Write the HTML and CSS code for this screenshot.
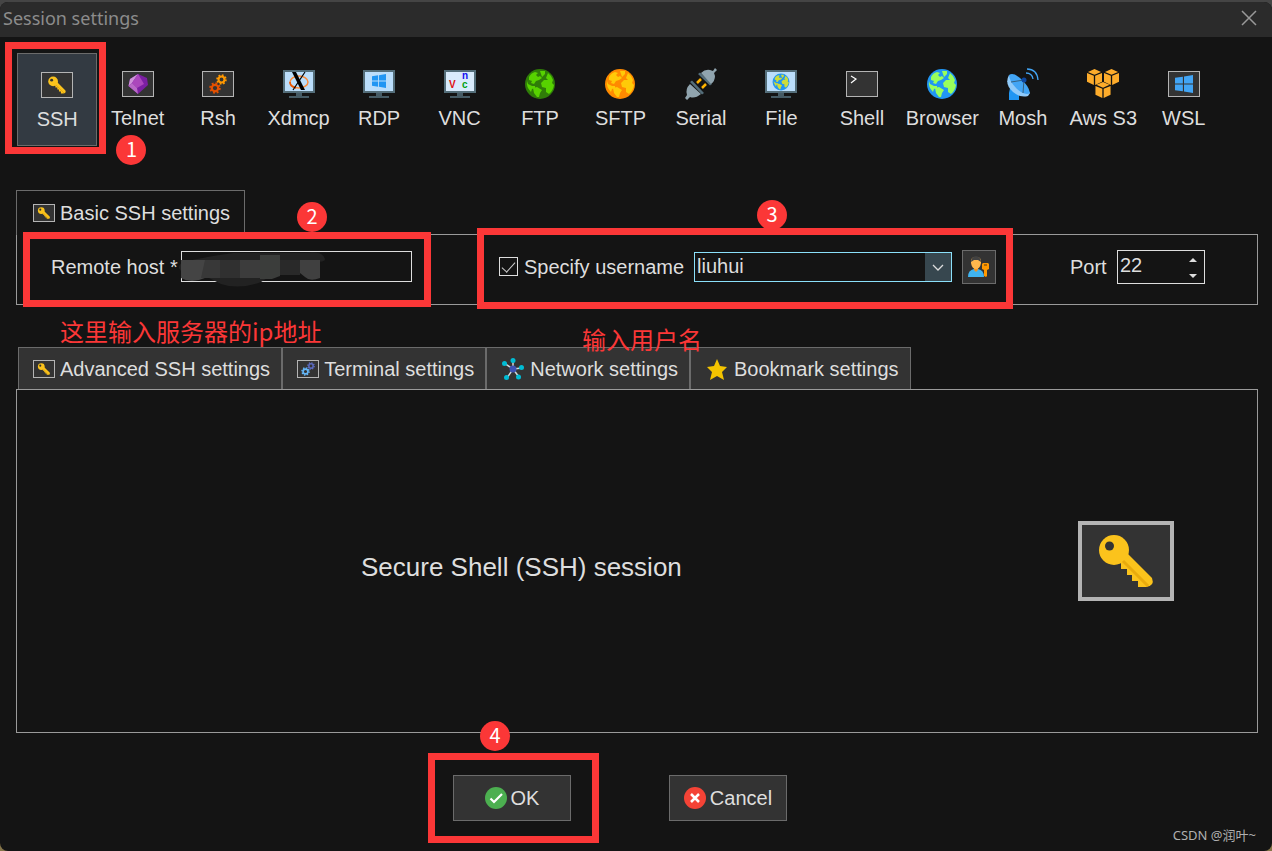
FILE: index.html
```html
<!DOCTYPE html>
<html lang="en">
<head>
    <meta charset="UTF-8">
    <meta name="viewport" content="width=device-width, initial-scale=1.0">
    <title>Session settings</title>
    <link rel="stylesheet" href="styles.css">
</head>
<body>
    <!-- Shared icon shapes -->
    <svg class="sprite" aria-hidden="true">
        <symbol id="key" viewBox="0 0 96 80">
            <path d="M48 31 74 57q3 8-6 9h-8v-6h-6v-6h-5v-6h-6v-6l-8-6z" fill="#fbc31c"/>
            <circle cx="36" cy="29" r="15" fill="#fbc31c"/>
            <path d="M45 40 70 65" stroke="#e9ab0d" stroke-width="3"/>
            <circle cx="31.500" cy="25" r="4.500" fill="#333"/>
        </symbol>
        <symbol id="box" viewBox="0 0 32 32">
            <rect x="0.500" y="3.500" width="31" height="25" fill="#333" stroke="#b4b4b4"/>
        </symbol>
        <symbol id="gear" viewBox="-12 -12 24 24">
            <circle r="6.500" fill="none" stroke="currentColor" stroke-width="4.500"/>
            <circle r="9.500" fill="none" stroke="currentColor" stroke-width="4" pathLength="16" stroke-dasharray="1 1"/>
        </symbol>
        <symbol id="monitor" viewBox="0 0 32 32">
            <path d="M0 2h32v23H0z" fill="#546e7a"/>
            <path d="M13 25h6v3h-6zM6 28h20v2H6z" fill="#455a64"/>
            <path d="M2 4h28v19H2z" fill="#bbdefb"/>
        </symbol>
        <symbol id="windows" viewBox="0 0 16 16">
            <path d="M0 2.500 7 1.500v6H0zM8 1.300 16 0v7.500H8zM0 8.500h7v6L0 13.500zM8 8.500h8V16l-8-1.300z" fill="currentColor"/>
        </symbol>
        <symbol id="globe" viewBox="0 0 32 32">
            <circle cx="16" cy="16" r="15" fill="var(--sea)"/>
            <path d="M5 9q2-4 6-5l3 1-2 2 2 2 2-1 2 2-3 2-3 1-2 3-3-1 1-2-3-1z" fill="var(--land)"/>
            <path d="M16 3l5 0 0 3-3 3-1-3zM3 13l1 3 4 2 3 0 0 2-3 1-1 3q-5-5-4-11z" fill="var(--land)"/>
            <path d="M9 20l4-1 5 3-2 3-1 4-2 0-3-4z" fill="var(--land)"/>
            <path d="M24 5q4 3 5 7l-1 3 2 2q-1 6-5 9l-3-2 0-4-4-1-1-4 3-3 4 0-2-2z" fill="var(--land)"/>
        </symbol>
        <symbol id="cube" viewBox="0 0 16 18">
            <path d="M8 0l7 3-7 3-7-3zM0 4.200l7.300 3V17L0 13.500zM16 4.200l-7.300 3V17L16 13.500z" fill="#fdac2b"/>
        </symbol>
    </svg>

    <div class="window">
        <header class="titlebar">
            <h1>Session settings</h1>
            <button class="close" aria-label="Close">
                <svg width="16" height="16"><path d="M1 1 15 15M15 1 1 15" stroke="#999" stroke-width="1.500"/></svg>
            </button>
        </header>

        <nav class="types">
            <button class="type selected">
                <svg class="icon"><use href="#box"/><use href="#key" y="3" width="32" height="26"/></svg>
                <span>SSH</span>
                <i class="frame frame-ssh"></i>
            </button>
            <button class="type">
                <svg class="icon"><use href="#box"/>
                    <path d="M16 6 8 11 6.500 18 16 26 26 17 25 10z" fill="#7b1fa2"/>
                    <path d="M16 6 8 11 6.500 18 10 15z" fill="#ce93d8"/>
                    <path d="M16 6 10 15 15 20 22 16z" fill="#ab47bc"/>
                    <path d="M6.500 18 10 15 15 20 16 26z" fill="#ba68c8"/>
                </svg>
                <span>Telnet</span>
                <b class="badge badge-1">1</b>
            </button>
            <button class="type">
                <svg class="icon"><use href="#box"/>
                    <use href="#gear" x="14" y="6" width="11" height="11" color="#ff9800"/>
                    <use href="#gear" x="7" y="14" width="12" height="12" color="#e65100"/>
                </svg>
                <span>Rsh</span>
            </button>
            <button class="type">
                <svg class="icon"><use href="#monitor"/>
                    <ellipse cx="16" cy="14" rx="9" ry="6" fill="none" stroke="#fb8c3c" stroke-width="1.500"/>
                    <path d="M7 14a9 6 0 0 0 6 6" fill="none" stroke="#e65100" stroke-width="1.500"/>
                    <path d="M9 4h4L22 22h-4z"/><path d="M22 4 10 22" stroke="#000" stroke-width="1.200"/>
                </svg>
                <span>Xdmcp</span>
            </button>
            <button class="type">
                <svg class="icon"><use href="#monitor"/><use href="#windows" x="9" y="6" width="14" height="14" color="#2196f3"/></svg>
                <span>RDP</span>
            </button>
            <button class="type">
                <svg class="icon"><use href="#monitor"/>
                    <path d="M2 4h28v19H2z" fill="#d9ebfc"/>
                    <text x="5" y="20" fill="#e01010">V</text>
                    <text x="18" y="11" fill="#1010f0">n</text>
                    <text x="18" y="20" fill="#00a010">c</text>
                </svg>
                <span>VNC</span>
            </button>
            <button class="type">
                <svg class="icon globe-green"><use href="#globe"/></svg>
                <span>FTP</span>
            </button>
            <button class="type">
                <svg class="icon globe-orange"><use href="#globe"/></svg>
                <span>SFTP</span>
            </button>
            <button class="type">
                <svg class="icon">
                    <path d="M12 15 16 11M17 20 21 16" stroke="#ffb300" stroke-width="2.500"/>
                    <path d="M13 6 15 4.500 27 16 25 17.500zM5 14 7 12.500 19 25 17 26.500z" fill="#546e7a"/>
                    <path d="M16 5q4-4 9-3l3 1 2-3 2 2-3 3 1 3q0 5-4 8zM5 16q-5 5-3 11l-2 3 2 2 3-3q5 2 11-3z" fill="#90a4ae"/>
                </svg>
                <span>Serial</span>
            </button>
            <button class="type">
                <svg class="icon globe-file"><use href="#monitor"/><use href="#globe" x="7" y="5" width="18" height="18"/></svg>
                <span>File</span>
            </button>
            <button class="type">
                <svg class="icon"><use href="#box"/><path d="M5 8l5 3-5 4" fill="none" stroke="#fff" stroke-width="1.200"/></svg>
                <span>Shell</span>
            </button>
            <button class="type">
                <svg class="icon globe-blue"><use href="#globe"/></svg>
                <span>Browser</span>
            </button>
            <button class="type">
                <svg class="icon">
                    <path d="M2 25l1-5 9 6v6H2z" fill="#2196f3"/>
                    <path d="M2 7q-5 9 4 17 7 6 15 4l2-3z" fill="#90caf9"/>
                    <path d="M2 7q4-3 11 3 9 8 10 15-5 3-13-4Q2 13 2 7z" fill="#42a5f5"/>
                    <path d="M4 14 17 12 16 25" fill="none" stroke="#37607d"/>
                    <circle cx="17" cy="12" r="2.500" fill="#0d47a1"/>
                    <path d="M19 5q6 0 7 6M20 1q10 0 11 11" fill="none" stroke="#42a5f5" stroke-width="1.300"/>
                </svg>
                <span>Mosh</span>
            </button>
            <button class="type">
                <svg class="icon">
                    <use href="#cube" x="0" y="1" width="15" height="17"/>
                    <use href="#cube" x="17" y="1" width="15" height="17"/>
                    <use href="#cube" x="8" y="14" width="16" height="17"/>
                </svg>
                <span>Aws S3</span>
            </button>
            <button class="type">
                <svg class="icon"><use href="#box"/><use href="#windows" x="7" y="7" width="18" height="18" color="#42a5f5"/></svg>
                <span>WSL</span>
            </button>
        </nav>

        <section class="basic">
            <div class="tabs">
                <button class="tab active">
                    <svg class="tab-icon" viewBox="0 0 22 18"><rect x="0.500" y="0.500" width="21" height="17" fill="#333" stroke="#b4b4b4"/><use href="#key" width="22" height="18"/></svg>
                    Basic SSH settings
                </button>
            </div>
            <form class="panel fields">
                <div class="field remote">
                    <label for="host">Remote host *</label>
                    <input type="text" id="host">
                    <svg class="scribble" viewBox="0 0 162 36">
                        <path d="M6 17q0-6 8-7L40 5 60 2h66l8 0q16-2 18 6 0 4-12 2l-4 2v6L96 26 88 31q-22 8-40 2L34 26 8 20z" fill="#222"/>
                        <path d="M8 9h24v18q-14 6-24 0z" fill="#444"/>
                        <path d="M32 9h36v18H28z" fill="#383838"/>
                        <path d="M47 9h20v18H47z" fill="#303030"/>
                        <path d="M67 9h20v18H67z" fill="#3c3c3c"/>
                        <path d="M87 4h20v21l-8 3H87z" fill="#3b3d3b"/>
                        <path d="M107 9h20v15h-20z" fill="#292929"/>
                        <path d="M127 9h20v18q-10 4-15-1l-5-4z" fill="#404040"/>
                    </svg>
                    <i class="frame"></i>
                    <b class="badge badge-2">2</b>
                </div>

                <div class="field user">
                    <input type="checkbox" id="specify" checked>
                    <label for="specify">Specify username</label>
                    <div class="combo">
                        <select id="username" aria-label="Username">
                            <option>liuhui</option>
                        </select>
                        <svg class="combo-arrow" viewBox="0 0 26 28"><path d="M8 12l5 5 5-5" fill="none" stroke="#ddd" stroke-width="1.300"/></svg>
                    </div>
                    <button type="button" class="users" aria-label="Manage users">
                        <svg width="24" height="24" viewBox="0 0 24 24">
                            <path d="M1 22q0-7 6-8h4q6 1 6 8z" fill="#40b4f0"/>
                            <path d="M7 11h4v4l-2 2-2-2z" fill="#f09020"/>
                            <path d="M4 6q0-4 5-4 5 0 5 4v2q-1 6-5 6T4 8z" fill="#ffb74d"/>
                            <path d="M4 7q0-5 5-6 5 1 5 6l-3-2H7z" fill="#424242"/>
                            <path d="M15 9l1-1h5l1 1v5l-2 1v6l-1 1-2-1v-6l-2-1z" fill="#ff9800"/>
                            <path d="M17 10h3" stroke="#5d3a10"/>
                        </svg>
                    </button>
                    <i class="frame"></i>
                    <b class="badge badge-3">3</b>
                    <p class="note note-user" lang="zh">输入用户名</p>
                </div>

                <div class="field port">
                    <label for="port">Port</label>
                    <input type="number" id="port" value="22">
                    <svg class="spin" width="8" height="20"><path d="M0 4 4 0l4 4zM0 16h8l-4 4z" fill="#ddd"/></svg>
                </div>
                <p class="note note-host" lang="zh">这里输入服务器的ip地址</p>
            </form>
        </section>

        <section class="details">
            <div class="tabs">
                <button class="tab">
                    <svg class="tab-icon" viewBox="0 0 22 18"><rect x="0.500" y="0.500" width="21" height="17" fill="#333" stroke="#b4b4b4"/><use href="#key" width="22" height="18"/></svg>
                    Advanced SSH settings
                </button>
                <button class="tab">
                    <svg class="tab-icon" viewBox="0 0 22 18"><rect x="0.500" y="0.500" width="21" height="17" fill="#333" stroke="#b4b4b4"/>
                        <use href="#gear" x="10" y="2" width="8" height="8" color="#5c6bc0"/>
                        <use href="#gear" x="4" y="7" width="9" height="9" color="#64b5f6"/>
                    </svg>
                    Terminal settings
                </button>
                <button class="tab">
                    <svg class="tab-icon wide" viewBox="0 0 24 24">
                        <path d="M12 12V4M12 12 3 6M12 12l9-1M12 12l6 8M12 12l-6 9" stroke="#cfd8dc" stroke-width="1.500"/>
                        <g fill="#00bcd4"><circle cx="12" cy="3.500" r="2.500"/><circle cx="3.500" cy="6.500" r="2.500"/><circle cx="20.500" cy="10.500" r="2.500"/><circle cx="17.500" cy="20" r="2.500"/><circle cx="5.500" cy="20.500" r="2.500"/></g>
                        <circle cx="12" cy="12" r="3.500" fill="#3f51b5"/>
                    </svg>
                    Network settings
                </button>
                <button class="tab">
                    <svg class="tab-icon wide" viewBox="0 0 24 24"><path d="M12 2l3 7 7 1-5 5 2 8-7-4-7 4 2-8-5-5 7-1z" fill="#f4c400"/></svg>
                    Bookmark settings
                </button>
            </div>
            <div class="panel summary">
                <p>Secure Shell (SSH) session</p>
                <svg class="big-key" viewBox="0 0 96 80">
                    <rect x="2" y="2" width="92" height="76" fill="#333" stroke="#b4b4b4" stroke-width="4"/>
                    <use href="#key" width="96" height="80"/>
                </svg>
            </div>
        </section>

        <footer class="actions">
            <div class="ok">
                <button class="action">
                    <svg width="22" height="22"><circle cx="11" cy="11" r="11" fill="#4caf50"/><path d="M5.500 11.500 9 15l8-8" fill="none" stroke="#fff" stroke-width="2.200"/></svg>
                    OK
                </button>
                <i class="frame"></i>
                <b class="badge badge-4">4</b>
            </div>
            <button class="action">
                <svg width="22" height="22"><circle cx="11" cy="11" r="11" fill="#f44336"/><path d="M7 7l8 8M15 7l-8 8" stroke="#fff" stroke-width="2.500"/></svg>
                Cancel
            </button>
            <small class="credit">CSDN @润叶~</small>
        </footer>
    </div>
</body>
</html>
```
FILE: styles.css
```css
* {
    box-sizing: border-box;
}
body {
    margin: 0;
    min-height: 100vh;
    padding-top: 2px;
    display: flex;
    background: linear-gradient(#454545 50%, #85754a 50%);
    color: #dedede;
    font-family: "Liberation Sans", Arial, sans-serif;
    font-size: 20px;
    line-height: 24px;
}
h1, p {
    margin: 0;
    font-weight: normal;
}
button, input, select {
    font: inherit;
    color: inherit;
}
button {
    padding: 0;
    background: #333;
    border: 1px solid #6b6b6b;
}
.sprite {
    position: absolute;
    width: 0;
    height: 0;
}
.window {
    flex: 1;
    min-width: 0;
    display: flex;
    flex-direction: column;
    background: #141414;
    border-radius: 8px;
}

/* title bar */
.titlebar {
    display: flex;
    justify-content: space-between;
    align-items: center;
    height: 35px;
    padding: 0 15px 3px 3px;
    background: #2b2b2b;
    border-radius: 8px 8px 0 0;
}
.titlebar h1 {
    color: #8c8c8c;
    font-family: "Noto Sans", "Open Sans", sans-serif;
    font-size: 18px;
}
.close {
    display: flex;
    background: none;
    border: 0;
}

/* session types */
.types {
    display: grid;
    grid-template-columns: repeat(15, 1fr);
    padding: 16px 48px 44px 17px;
}
.type {
    position: relative;
    display: flex;
    flex-direction: column;
    align-items: center;
    gap: 6px;
    height: 93px;
    padding-top: 14px;
    background: none;
    border-color: transparent;
    white-space: nowrap;
}
.type.selected {
    padding-top: 15px;
    background: #333a42;
    border-color: #6b6b6b;
}
.icon {
    width: 32px;
    height: 32px;
    flex: none;
}
.icon text {
    font-size: 10px;
    font-weight: bold;
}
.globe-green { --sea: #2f7d08; --land: #57d200; }
.globe-orange { --sea: #ff8a00; --land: #ffca08; }
.globe-blue { --sea: #2196f3; --land: #98ff5c; }
.globe-file { --sea: #2196f3; --land: #cddc39; }

/* tabs and panels */
.basic, .details {
    margin: 0 14px 0 16px;
}
.details {
    flex: 1;
    display: flex;
    flex-direction: column;
    margin-top: 42px;
}
.tabs {
    display: flex;
}
.details .tabs {
    padding-left: 2px;
}
.tab {
    display: flex;
    align-items: center;
    gap: 5px;
    height: 42px;
    padding: 0 11px 0 14px;
    border-bottom: 0;
    white-space: nowrap;
}
.tab.active {
    height: 45px;
    margin-bottom: -1px;
    padding: 0 14px 0 16px;
    background: #141414;
    z-index: 1;
}
.tab-icon {
    width: 22px;
    height: 18px;
}
.tab-icon.wide {
    width: 24px;
    height: 24px;
}
.panel {
    border: 1px solid #9a9a9a;
}

/* basic fields */
.fields {
    position: relative;
    display: flex;
    align-items: center;
    height: 71px;
    padding: 0 52px 6px 34px;
}
.field {
    position: relative;
    display: flex;
    align-items: center;
    white-space: nowrap;
}
.remote {
    flex: 361;
    justify-content: space-between;
}
.remote input {
    width: 231px;
    height: 31px;
    background: #141414;
    border: 1px solid #dedede;
}
.user {
    flex: 497;
    margin-left: 87px;
}
.user input {
    appearance: none;
    width: 19px;
    height: 19px;
    margin: 0 6px 0 0;
    background: #141414;
    border: 1px solid #dedede;
}
.user input:checked {
    display: grid;
    place-items: center;
}
.user input:checked::before {
    content: "";
    width: 6px;
    height: 12px;
    margin-bottom: 3px;
    border: solid #ccc;
    border-width: 0 1px 1px 0;
    transform: rotate(42deg);
}
.combo {
    position: relative;
    flex: 1;
    margin: 0 10px;
}
.combo select {
    appearance: none;
    display: block;
    width: 100%;
    height: 30px;
    padding: 0 26px 2px 2px;
    background: #141414;
    border: 1px solid #8be0fa;
    border-radius: 0;
}
.combo-arrow {
    position: absolute;
    top: 1px;
    right: 1px;
    width: 26px;
    height: 28px;
    background: #37474f;
    pointer-events: none;
}
.users {
    display: grid;
    place-items: center;
    width: 34px;
    height: 34px;
}
.port {
    margin-left: 74px;
    width: 135px;
    justify-content: space-between;
}
.port input {
    appearance: textfield;
    width: 88px;
    height: 34px;
    padding: 0 2px 3px;
    background: #141414;
    border: 1px solid #dedede;
}
.port input::-webkit-inner-spin-button {
    appearance: none;
}
.spin {
    position: absolute;
    top: 8px;
    right: 8px;
}

/* session summary */
.summary {
    flex: 1;
    display: flex;
    justify-content: space-between;
    align-items: center;
    padding: 0 83px 0 344px;
}
.summary p {
    padding-top: 12px;
    font-size: 26px;
    line-height: 32px;
}
.big-key {
    width: 96px;
    height: 80px;
}

/* buttons */
.actions {
    position: relative;
    display: flex;
    justify-content: center;
    gap: 98px;
    padding: 42px 32px 30px 0;
}
.ok {
    position: relative;
}
.action {
    display: flex;
    justify-content: center;
    align-items: center;
    gap: 4px;
    width: 118px;
    height: 46px;
}
.credit {
    position: absolute;
    right: 16px;
    bottom: 4px;
    color: #b0b0b0;
    font-family: "Noto Sans", "Noto Sans CJK SC", sans-serif;
    font-size: 13px;
}

/* red marks over the dialog */
.frame {
    position: absolute;
    z-index: 2;
    border: 7px solid #fb3737;
    pointer-events: none;
}
.frame-ssh { inset: -12px -10px -9px -13px; }
.remote .frame { inset: -19px -19px -25px -28px; }
.user .frame { inset: -22px -17px -25px -22px; }
.ok .frame { inset: -22px -28px -22px -25px; }
.badge {
    position: absolute;
    z-index: 3;
    width: 30px;
    height: 30px;
    background: #fb3737;
    border-radius: 50%;
    color: #fff;
    font-family: "Noto Sans CJK SC", sans-serif;
    font-size: 20px;
    font-weight: normal;
    line-height: 28px;
    text-align: center;
}
.badge-1 { left: 18px; top: 81px; }
.badge-2 { left: 246px; top: -49px; }
.badge-3 { left: 258px; top: -50px; }
.badge-4 { left: 27px; top: -54px; }
.note {
    position: absolute;
    z-index: 3;
    color: #fb3737;
    font-family: "Noto Sans CJK SC", sans-serif;
    font-size: 24px;
    line-height: 28px;
    white-space: nowrap;
}
.note-host { left: 43px; top: 82px; }
.note-user { left: 83px; top: 75px; }
.scribble {
    position: absolute;
    right: 77px;
    top: 0;
    width: 162px;
    height: 36px;
}
```
